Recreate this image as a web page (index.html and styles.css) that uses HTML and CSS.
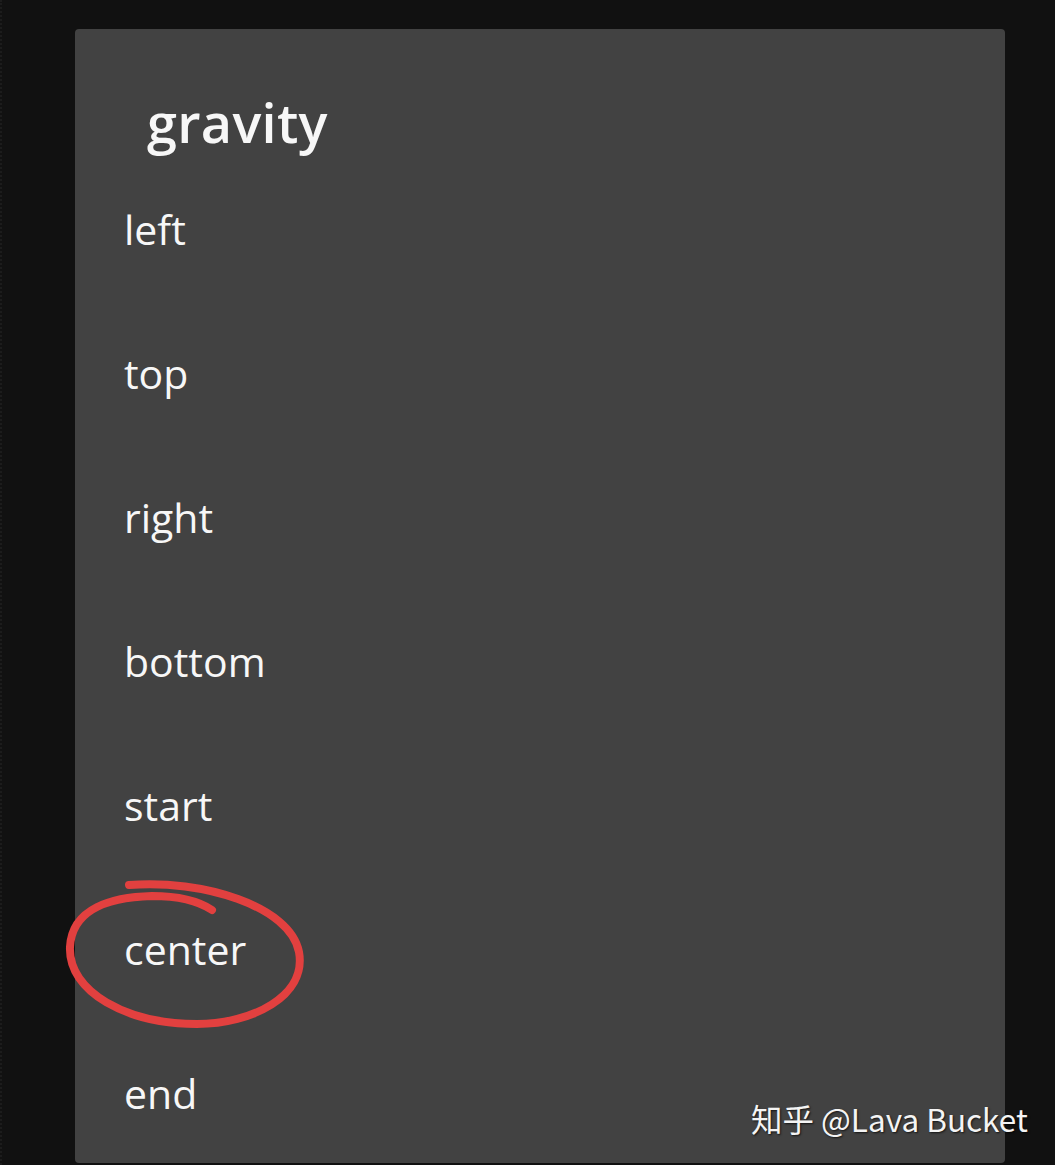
FILE: index.html
```html
<!DOCTYPE html>
<html lang="en">
<head>
<meta charset="utf-8">
<title>gravity</title>
<link rel="stylesheet" href="styles.css">
</head>
<body>
<div class="page">
  <div class="card">
    <h1 class="title">gravity</h1>
    <ul class="options">
      <li class="option">left</li>
      <li class="option">top</li>
      <li class="option">right</li>
      <li class="option">bottom</li>
      <li class="option">start</li>
      <li class="option">center</li>
      <li class="option">end</li>
    </ul>
  </div>
  <svg class="mark" width="1055" height="1165" viewBox="0 0 1055 1165" aria-hidden="true">
    <path d="M127 885 C200 879 288 906 297 952 C305 996 250 1024 195 1024 C125 1024 66 992 68 947 C70 908 110 897 150 896 C178 896 198 902 210 910" fill="none" stroke="#e2403f" stroke-width="8" stroke-linecap="round" stroke-linejoin="round"/>
  </svg>
  <div class="watermark">知乎 @Lava Bucket</div>
</div>
</body>
</html>
```

FILE: styles.css
```css
html, body {
  margin: 0;
  padding: 0;
  background: #111111;
  height: 1165px;
  overflow: hidden;
}

.page {
  position: relative;
  height: 1165px;
  padding-top: 29px;
  box-sizing: border-box;
  border-left: 2px dotted #1c1c1c;
}

.card {
  margin-left: 73px;
  width: 930px;
  height: 1134px;
  background: #424242;
  border-radius: 4px;
  padding: 62px 0 0 49px;
  box-sizing: border-box;
  overflow: hidden;
  color: #f7f7f7;
  font-family: "Open Sans", "Noto Sans", sans-serif;
}

.title {
  margin: 0 0 4px 23px;
  font-size: 54px;
  font-weight: 600;
  line-height: 62px;
  letter-spacing: 0.3px;
}

.options {
  list-style: none;
  margin: 0;
  padding: 0;
}

.option {
  font-size: 41px;
  line-height: 144px;
  height: 144px;
  font-weight: 400;
}

.mark {
  position: absolute;
  left: 0;
  top: 0;
  pointer-events: none;
}

.watermark {
  position: absolute;
  left: 749px;
  top: 1096px;
  font-family: "Noto Sans CJK SC", "Noto Sans", sans-serif;
  font-size: 31.5px;
  line-height: 44px;
  color: #f4f4f4;
  text-shadow: 1px 1px 2px rgba(0, 0, 0, 0.7);
  white-space: nowrap;
}
```
